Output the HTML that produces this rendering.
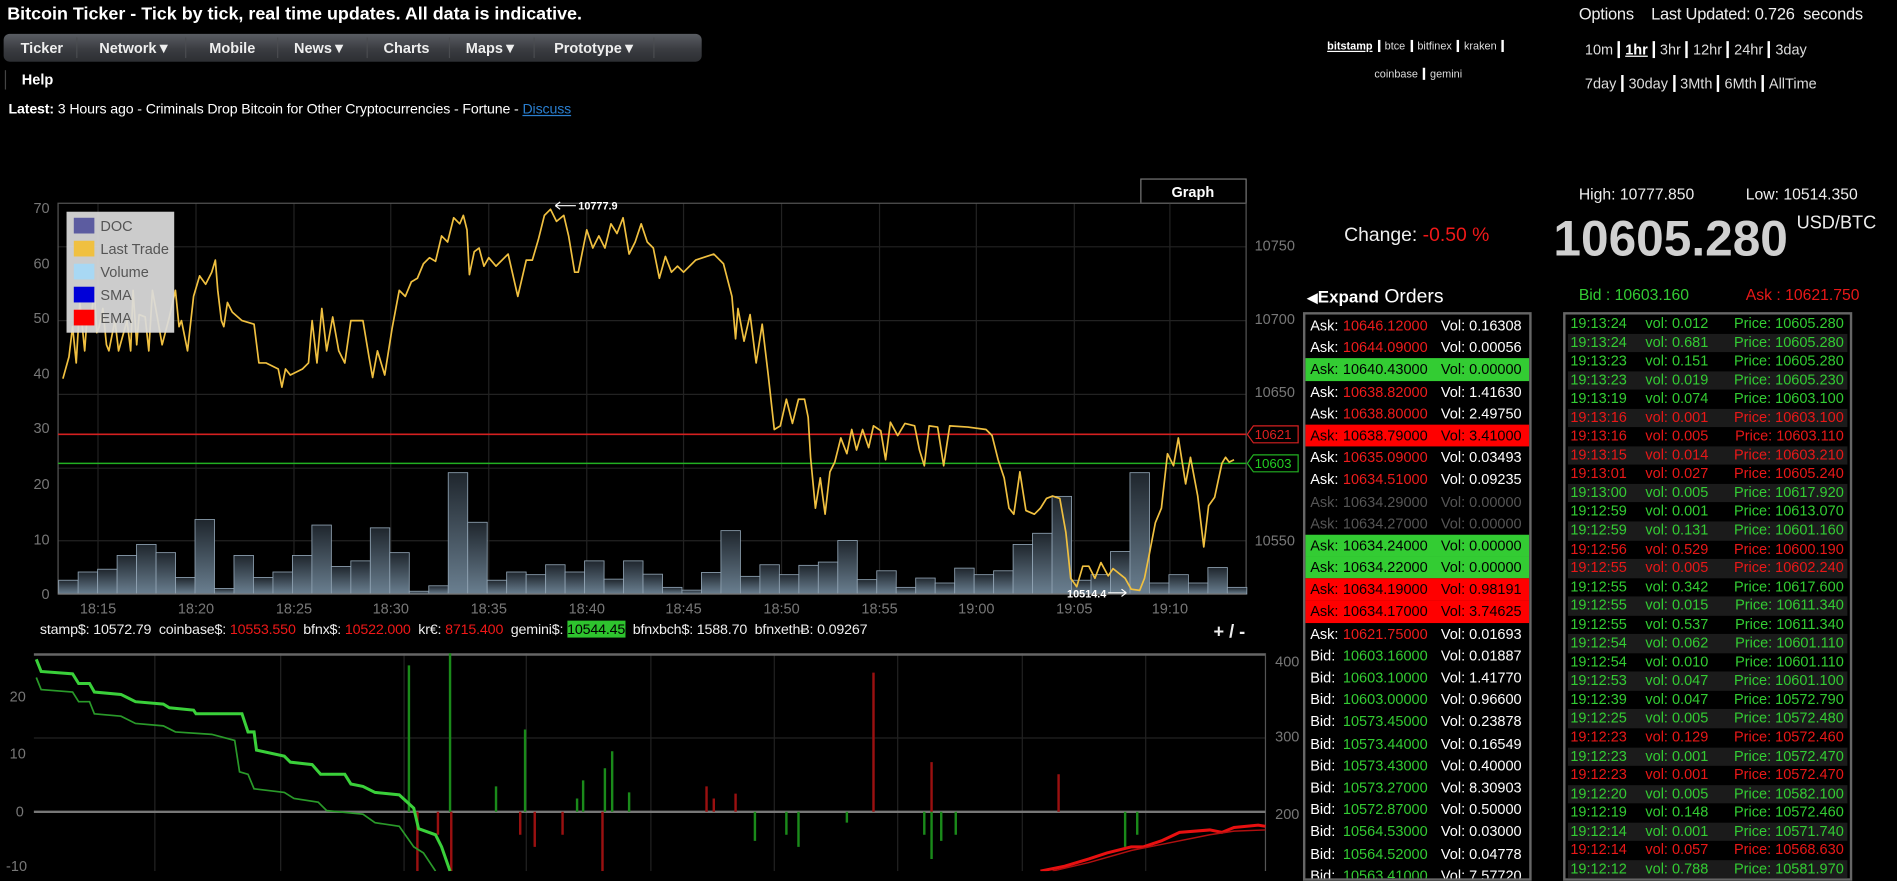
<!DOCTYPE html>
<html><head><meta charset="utf-8">
<style>
*{margin:0;padding:0;box-sizing:border-box}
html,body{width:1897px;height:871px;overflow:hidden;background:#000}
#w{position:absolute;left:0;top:0;width:1568px;height:720px;transform:scale(1.20982);transform-origin:0 0;font-family:"Liberation Sans",Arial,sans-serif;color:#fff}
.a{position:absolute;white-space:nowrap}
.nav{position:absolute;left:3px;top:28px;width:577px;height:23px;border-radius:5px;background:linear-gradient(#5a5d63,#3a3c41 55%,#2c2e32)}
.nav span{position:absolute;top:5px;font-size:12px;font-weight:bold;color:#eee}
.nav i{position:absolute;top:3px;width:1px;height:17px;background:#4a4c50}
.sep{border-right:2px solid #fff;padding-right:4px;margin-right:4px}
.ex{font-size:9px;color:#ddd}
.tf{font-size:12px;color:#ddd}
.ob{position:absolute;left:1077px;top:258px;width:189px;height:470px;border:2px solid #666;overflow:hidden}
.ob div{height:18.2px;font-size:12px;line-height:18.2px;position:relative;color:#fff}
.ob b{font-weight:normal;position:absolute;left:4px}
.ob u{text-decoration:none;position:absolute;left:31px}
.ob s{text-decoration:none;position:absolute;left:112px}
.rd u{color:#ee1c1c}.gr u{color:#33cc33}
.gb{background:#33cc33;color:#000!important}.gb u{color:#000}
.rb{background:#f00;color:#000!important}.rb u{color:#000}
.gy{color:#555!important}.gy u{color:#555}
.tb{position:absolute;left:1292px;top:258px;width:239px;height:470px;border:2px solid #666;overflow:hidden;padding:0 2px}
.tb div{height:15.55px;font-size:12px;line-height:15.55px;position:relative;color:#3c3}
.tb div:nth-child(even){background:#1b1b1b}
.tb .r{color:#e81818}
.tb b{font-weight:normal;position:absolute;left:2px}
.tb u{text-decoration:none;position:absolute;left:64px}
.tb s{text-decoration:none;position:absolute;right:3px}
</style></head><body><div id="w">
<div class="a" style="left:6px;top:4px;font-size:14.8px;font-weight:bold">Bitcoin Ticker - Tick by tick, real time updates. All data is indicative.</div>
<div class="nav">
<span style="left:14px">Ticker</span><i style="left:60px"></i>
<span style="left:79px">Network▼</span><i style="left:150px"></i>
<span style="left:170px">Mobile</span><i style="left:226px"></i>
<span style="left:240px">News▼</span><i style="left:300px"></i>
<span style="left:314px">Charts</span><i style="left:368px"></i>
<span style="left:382px">Maps▼</span><i style="left:438px"></i>
<span style="left:455px">Prototype▼</span><i style="left:537px"></i>
</div>
<div class="a" style="left:4px;top:58px;width:1px;height:16px;background:#444"></div>
<div class="a" style="left:18px;top:59px;font-size:12px;font-weight:bold">Help</div>
<div class="a" style="left:7px;top:84px;font-size:11.7px;letter-spacing:-0.1px"><b>Latest:</b> 3 Hours ago - Criminals Drop Bitcoin for Other Cryptocurrencies - Fortune - <span style="color:#2a7fd0;text-decoration:underline">Discuss</span></div>

<div class="a ex" style="left:1097px;top:33px"><span class="sep" style="font-weight:bold;text-decoration:underline;color:#fff">bitstamp</span><span class="sep">btce</span><span class="sep">bitfinex</span><span class="sep">kraken</span></div>
<div class="a ex" style="left:1136px;top:56px"><span class="sep">coinbase</span><span>gemini</span></div>

<div class="a" style="left:1305px;top:4px;font-size:13.6px;color:#eee;letter-spacing:-0.2px">Options &nbsp;&nbsp; Last Updated: 0.726 &nbsp;seconds</div>
<div class="a tf" style="left:1310px;top:34px"><span class="sep">10m</span><span class="sep" style="font-weight:bold;text-decoration:underline;color:#fff">1hr</span><span class="sep">3hr</span><span class="sep">12hr</span><span class="sep">24hr</span><span>3day</span></div>
<div class="a tf" style="left:1310px;top:62px"><span class="sep">7day</span><span class="sep">30day</span><span class="sep">3Mth</span><span class="sep">6Mth</span><span>AllTime</span></div>

<div class="a" style="left:1305px;top:153px;font-size:13px;color:#eee">High: 10777.850</div>
<div class="a" style="left:1443px;top:153px;font-size:13px;color:#eee">Low: 10514.350</div>
<div class="a" style="left:1284px;top:174px;font-size:41px;font-weight:bold;color:#d0d0d0">10605.280</div>
<div class="a" style="left:1485px;top:176px;font-size:15px;color:#eee">USD/BTC</div>
<div class="a" style="left:1111px;top:186px;font-size:16px;color:#eee">Change: <span style="color:#f01818">-0.50 %</span></div>
<div class="a" style="left:1305px;top:236px;font-size:13px;color:#3c3">Bid : 10603.160</div>
<div class="a" style="left:1443px;top:236px;font-size:13px;color:#e81818">Ask : 10621.750</div>
<div class="a" style="left:1080px;top:237px;font-size:16px"><span style="font-size:12px">◀</span><b style="font-size:14px">Expand</b> Orders</div>

<div class="ob">
<div class="rd"><b>Ask:</b><u>10646.12000</u><s>Vol: 0.16308</s></div>
<div class="rd"><b>Ask:</b><u>10644.09000</u><s>Vol: 0.00056</s></div>
<div class="gb"><b>Ask:</b><u>10640.43000</u><s>Vol: 0.00000</s></div>
<div class="rd"><b>Ask:</b><u>10638.82000</u><s>Vol: 1.41630</s></div>
<div class="rd"><b>Ask:</b><u>10638.80000</u><s>Vol: 2.49750</s></div>
<div class="rb"><b>Ask:</b><u>10638.79000</u><s>Vol: 3.41000</s></div>
<div class="rd"><b>Ask:</b><u>10635.09000</u><s>Vol: 0.03493</s></div>
<div class="rd"><b>Ask:</b><u>10634.51000</u><s>Vol: 0.09235</s></div>
<div class="gy"><b>Ask:</b><u>10634.29000</u><s>Vol: 0.00000</s></div>
<div class="gy"><b>Ask:</b><u>10634.27000</u><s>Vol: 0.00000</s></div>
<div class="gb"><b>Ask:</b><u>10634.24000</u><s>Vol: 0.00000</s></div>
<div class="gb"><b>Ask:</b><u>10634.22000</u><s>Vol: 0.00000</s></div>
<div class="rb"><b>Ask:</b><u>10634.19000</u><s>Vol: 0.98191</s></div>
<div class="rb"><b>Ask:</b><u>10634.17000</u><s>Vol: 3.74625</s></div>
<div class="rd"><b>Ask:</b><u>10621.75000</u><s>Vol: 0.01693</s></div>
<div class="gr"><b>Bid:</b><u>10603.16000</u><s>Vol: 0.01887</s></div>
<div class="gr"><b>Bid:</b><u>10603.10000</u><s>Vol: 1.41770</s></div>
<div class="gr"><b>Bid:</b><u>10603.00000</u><s>Vol: 0.96600</s></div>
<div class="gr"><b>Bid:</b><u>10573.45000</u><s>Vol: 0.23878</s></div>
<div class="gr"><b>Bid:</b><u>10573.44000</u><s>Vol: 0.16549</s></div>
<div class="gr"><b>Bid:</b><u>10573.43000</u><s>Vol: 0.40000</s></div>
<div class="gr"><b>Bid:</b><u>10573.27000</u><s>Vol: 8.30903</s></div>
<div class="gr"><b>Bid:</b><u>10572.87000</u><s>Vol: 0.50000</s></div>
<div class="gr"><b>Bid:</b><u>10564.53000</u><s>Vol: 0.03000</s></div>
<div class="gr"><b>Bid:</b><u>10564.52000</u><s>Vol: 0.04778</s></div>
<div class="gr"><b>Bid:</b><u>10563.41000</u><s>Vol: 7.57720</s></div>
</div>

<div class="tb">
<div><b>19:13:24</b><u>vol: 0.012</u><s>Price: 10605.280</s></div>
<div><b>19:13:24</b><u>vol: 0.681</u><s>Price: 10605.280</s></div>
<div><b>19:13:23</b><u>vol: 0.151</u><s>Price: 10605.280</s></div>
<div><b>19:13:23</b><u>vol: 0.019</u><s>Price: 10605.230</s></div>
<div><b>19:13:19</b><u>vol: 0.074</u><s>Price: 10603.100</s></div>
<div class="r"><b>19:13:16</b><u>vol: 0.001</u><s>Price: 10603.100</s></div>
<div class="r"><b>19:13:16</b><u>vol: 0.005</u><s>Price: 10603.110</s></div>
<div class="r"><b>19:13:15</b><u>vol: 0.014</u><s>Price: 10603.210</s></div>
<div class="r"><b>19:13:01</b><u>vol: 0.027</u><s>Price: 10605.240</s></div>
<div><b>19:13:00</b><u>vol: 0.005</u><s>Price: 10617.920</s></div>
<div><b>19:12:59</b><u>vol: 0.001</u><s>Price: 10613.070</s></div>
<div><b>19:12:59</b><u>vol: 0.131</u><s>Price: 10601.160</s></div>
<div class="r"><b>19:12:56</b><u>vol: 0.529</u><s>Price: 10600.190</s></div>
<div class="r"><b>19:12:55</b><u>vol: 0.005</u><s>Price: 10602.240</s></div>
<div><b>19:12:55</b><u>vol: 0.342</u><s>Price: 10617.600</s></div>
<div><b>19:12:55</b><u>vol: 0.015</u><s>Price: 10611.340</s></div>
<div><b>19:12:55</b><u>vol: 0.537</u><s>Price: 10611.340</s></div>
<div><b>19:12:54</b><u>vol: 0.062</u><s>Price: 10601.110</s></div>
<div><b>19:12:54</b><u>vol: 0.010</u><s>Price: 10601.110</s></div>
<div><b>19:12:53</b><u>vol: 0.047</u><s>Price: 10601.100</s></div>
<div><b>19:12:39</b><u>vol: 0.047</u><s>Price: 10572.790</s></div>
<div><b>19:12:25</b><u>vol: 0.005</u><s>Price: 10572.480</s></div>
<div class="r"><b>19:12:23</b><u>vol: 0.129</u><s>Price: 10572.460</s></div>
<div><b>19:12:23</b><u>vol: 0.001</u><s>Price: 10572.470</s></div>
<div class="r"><b>19:12:23</b><u>vol: 0.001</u><s>Price: 10572.470</s></div>
<div><b>19:12:20</b><u>vol: 0.005</u><s>Price: 10582.100</s></div>
<div><b>19:12:19</b><u>vol: 0.148</u><s>Price: 10572.460</s></div>
<div><b>19:12:14</b><u>vol: 0.001</u><s>Price: 10571.740</s></div>
<div class="r"><b>19:12:14</b><u>vol: 0.057</u><s>Price: 10568.630</s></div>
<div><b>19:12:12</b><u>vol: 0.788</u><s>Price: 10581.970</s></div>
</div>

<svg class="a" style="left:0;top:140px" width="1080" height="380" viewBox="0 140 1080 380" font-family="Liberation Sans, Arial, sans-serif">
<defs><linearGradient id="bg" x1="0" y1="0" x2="0" y2="1"><stop offset="0" stop-color="#1f262d"/><stop offset="1" stop-color="#6a7f90"/></linearGradient></defs>
<rect x="943" y="148" width="87" height="20" fill="#000" stroke="#777"/>
<text x="986" y="163" font-size="12" font-weight="bold" fill="#fff" text-anchor="middle">Graph</text>
<g stroke="#222" stroke-width="1">
<line x1="48" y1="204" x2="1030" y2="204"/><line x1="48" y1="265" x2="1030" y2="265"/><line x1="48" y1="326" x2="1030" y2="326"/><line x1="48" y1="387" x2="1030" y2="387"/><line x1="48" y1="447" x2="1030" y2="447"/>
<line x1="81" y1="168" x2="81" y2="491"/><line x1="162" y1="168" x2="162" y2="491"/><line x1="243" y1="168" x2="243" y2="491"/><line x1="323" y1="168" x2="323" y2="491"/><line x1="404" y1="168" x2="404" y2="491"/><line x1="485" y1="168" x2="485" y2="491"/><line x1="565" y1="168" x2="565" y2="491"/><line x1="646" y1="168" x2="646" y2="491"/><line x1="727" y1="168" x2="727" y2="491"/><line x1="807" y1="168" x2="807" y2="491"/><line x1="888" y1="168" x2="888" y2="491"/><line x1="967" y1="168" x2="967" y2="491"/>
</g>
<rect x="48" y="168" width="982" height="323" fill="none" stroke="#555"/>
<g id="bars"></g>
<line x1="48" y1="491" x2="1030" y2="491" stroke="#777"/>
<line x1="48" y1="359" x2="1030" y2="359" stroke="#d42020" stroke-width="1.3"/>
<line x1="48" y1="383" x2="1030" y2="383" stroke="#22b022" stroke-width="1.3"/>
<polyline fill="none" stroke="#f0c040" stroke-width="1.4" stroke-linejoin="round" points="52,313 57,295 60,270 63,300 66,250 70,290 72,262 75,265 78,240 80,275 82,270 85,255 88,285 90,290 95,265 98,290 105,265 108,290 110,240 113,285 115,260 120,262 123,290 126,240 130,262 134,285 140,262 145,240 148,270 150,265 155,290 160,245 165,228 170,235 175,225 178,215 180,240 183,265 185,270 188,250 192,258 200,265 210,268 214,300 220,300 230,305 233,320 236,305 240,310 250,305 255,300 258,265 262,300 266,255 270,290 275,262 280,290 285,300 290,265 300,265 305,295 308,312 312,290 318,310 324,272 330,240 335,245 340,233 345,230 350,218 355,213 360,216 365,195 370,200 375,180 380,185 383,178 386,190 388,227 392,208 396,205 400,220 404,213 410,220 420,210 428,245 435,215 440,215 445,198 450,178 455,173 460,183 466,178 470,195 475,225 478,225 485,190 490,205 495,195 500,205 505,185 510,193 515,180 520,210 525,200 530,185 535,200 540,205 545,230 550,212 555,225 560,220 565,225 575,215 590,210 598,218 605,245 608,280 610,255 615,282 620,260 625,300 630,268 635,310 640,355 645,352 650,330 655,350 660,330 665,330 668,345 670,378 674,420 678,395 682,425 686,390 690,382 695,362 700,375 704,355 708,372 713,355 718,370 722,352 728,356 732,380 736,349 742,360 748,350 756,352 760,372 764,385 768,352 775,353 780,385 785,352 800,353 815,355 820,360 825,380 830,395 834,420 838,425 843,390 848,422 855,425 860,420 865,412 870,410 876,412 881,440 885,478 890,485 895,468 900,468 905,478 910,465 916,476 920,470 930,478 935,487 942,488 946,478 950,458 955,432 960,420 965,375 970,385 974,362 980,400 984,378 990,410 995,452 999,418 1004,411 1010,383 1013,378 1016,382 1020,380"/>
<text x="478" y="173" font-size="9" font-weight="bold" fill="#fff">10777.9</text>
<path d="M459 170 H476 M459 170 l4 -3 M459 170 l4 3" stroke="#fff" fill="none"/>
<text x="882" y="494" font-size="9" font-weight="bold" fill="#fff">10514.4</text>
<path d="M916 490 H931 M931 490 l-4 -3 M931 490 l-4 3" stroke="#fff" fill="none"/>
<rect x="55" y="175" width="89" height="100" fill="#dcdcdc" opacity="0.93"/>
<g font-size="12" fill="#555">
<rect x="61" y="180" width="17" height="13" fill="#5c5ca0"/><text x="83" y="191">DOC</text>
<rect x="61" y="199" width="17" height="13" fill="#f0c040"/><text x="83" y="210">Last Trade</text>
<rect x="61" y="218" width="17" height="13" fill="#a8d8f4"/><text x="83" y="229">Volume</text>
<rect x="61" y="237" width="17" height="13" fill="#0000d8"/><text x="83" y="248">SMA</text>
<rect x="61" y="256" width="17" height="13" fill="#ff0000"/><text x="83" y="267">EMA</text>
</g>
<g font-size="12" fill="#777" text-anchor="end">
<text x="41" y="176">70</text><text x="41" y="313">40</text><text x="41" y="267">50</text><text x="41" y="222">60</text><text x="41" y="358">30</text><text x="41" y="404">20</text><text x="41" y="450">10</text><text x="41" y="495">0</text>
</g>
<g font-size="12" fill="#777">
<text x="1037" y="207">10750</text><text x="1037" y="268">10700</text><text x="1037" y="328">10650</text><text x="1037" y="451">10550</text>
</g>
<path d="M1031 359 l5 -7 h37 v14 h-37 z" fill="#000" stroke="#d42020"/><text x="1037" y="363" font-size="11" fill="#e02020">10621</text>
<path d="M1031 383 l5 -7 h37 v14 h-37 z" fill="#000" stroke="#22b022"/><text x="1037" y="387" font-size="11" fill="#2c2">10603</text>
<g font-size="12" fill="#777" text-anchor="middle">
<text x="81" y="507">18:15</text><text x="162" y="507">18:20</text><text x="243" y="507">18:25</text><text x="323" y="507">18:30</text><text x="404" y="507">18:35</text><text x="485" y="507">18:40</text><text x="565" y="507">18:45</text><text x="646" y="507">18:50</text><text x="727" y="507">18:55</text><text x="807" y="507">19:00</text><text x="888" y="507">19:05</text><text x="967" y="507">19:10</text>
</g>
</svg>

<div class="a" style="left:33px;top:513px;font-size:11.8px;color:#eee;letter-spacing:-0.15px">stamp$: 10572.79 &nbsp;coinbase$: <span style="color:#f01818">10553.550</span> &nbsp;bfnx$: <span style="color:#f01818">10522.000</span> &nbsp;kr€: <span style="color:#f01818">8715.400</span> &nbsp;gemini$: <span style="background:#2ec42e;color:#000">10544.45</span> &nbsp;bfnxbch$: 1588.70 &nbsp;bfnxethɃ: 0.09267</div>
<div class="a" style="left:1003px;top:514px;font-size:15px;font-weight:bold;color:#eee">+ / -</div>

<svg class="a" style="left:0;top:530px" width="1080" height="190" viewBox="0 530 1080 190" font-family="Liberation Sans, Arial, sans-serif">
<g stroke="#222"><line x1="28" y1="610" x2="1046" y2="610"/>
<line x1="128" y1="540" x2="128" y2="720"/><line x1="232" y1="540" x2="232" y2="720"/><line x1="334" y1="540" x2="334" y2="720"/><line x1="435" y1="540" x2="435" y2="720"/><line x1="538" y1="540" x2="538" y2="720"/><line x1="640" y1="540" x2="640" y2="720"/><line x1="742" y1="540" x2="742" y2="720"/><line x1="845" y1="540" x2="845" y2="720"/><line x1="947" y1="540" x2="947" y2="720"/></g>
<line x1="28" y1="541" x2="1046" y2="541" stroke="#666" stroke-width="2"/>
<line x1="1046" y1="540" x2="1046" y2="720" stroke="#555"/>
<line x1="28" y1="671" x2="1046" y2="671" stroke="#777" stroke-width="2"/>
<g stroke="#1a8a1a" stroke-width="2">
<line x1="338" y1="550" x2="338" y2="671"/><line x1="372" y1="540" x2="372" y2="671"/><line x1="434" y1="603" x2="434" y2="671"/><line x1="506" y1="621" x2="506" y2="671"/><line x1="520" y1="655" x2="520" y2="671"/><line x1="410" y1="650" x2="410" y2="671"/><line x1="477" y1="660" x2="477" y2="671"/><line x1="482" y1="645" x2="482" y2="671"/><line x1="500" y1="635" x2="500" y2="671"/><line x1="624" y1="671" x2="624" y2="695"/><line x1="650" y1="671" x2="650" y2="690"/><line x1="660" y1="671" x2="660" y2="700"/><line x1="700" y1="671" x2="700" y2="680"/><line x1="764" y1="671" x2="764" y2="690"/><line x1="770" y1="671" x2="770" y2="710"/><line x1="778" y1="671" x2="778" y2="695"/><line x1="790" y1="671" x2="790" y2="690"/><line x1="930" y1="671" x2="930" y2="700"/><line x1="940" y1="671" x2="940" y2="690"/>
</g>
<g stroke="#9a1010" stroke-width="2">
<line x1="722" y1="556" x2="722" y2="671"/><line x1="770" y1="630" x2="770" y2="671"/><line x1="345" y1="671" x2="345" y2="720"/><line x1="362" y1="671" x2="362" y2="690"/><line x1="373" y1="671" x2="373" y2="720"/><line x1="442" y1="671" x2="442" y2="700"/><line x1="465" y1="671" x2="465" y2="690"/><line x1="498" y1="671" x2="498" y2="720"/><line x1="584" y1="650" x2="584" y2="671"/><line x1="590" y1="660" x2="590" y2="671"/><line x1="608" y1="656" x2="608" y2="671"/><line x1="875" y1="640" x2="875" y2="671"/><line x1="430" y1="671" x2="430" y2="690"/></g>
<polyline fill="none" stroke="#2a9a2a" stroke-width="1.4" points="30,560 34,570 60,572 65,580 74,580 78,590 100,592 112,598 135,600 145,605 175,607 194,612 198,638 205,640 210,652 235,655 243,660 263,663 270,670 300,673 310,680 330,683 342,700 350,705 360,720"/>
<polyline fill="none" stroke="#3ad03a" stroke-width="2.5" points="30,545 34,555 60,557 65,565 74,565 78,572 100,574 112,580 135,582 140,585 160,587 162,590 200,590 205,605 210,605 212,620 235,625 240,630 258,632 265,640 285,640 290,648 300,650 310,655 330,657 342,668 346,685 360,690 365,700 372,720"/>
<polyline fill="none" stroke="#e81010" stroke-width="2.5" points="860,720 880,716 900,710 915,705 935,700 945,700 960,695 975,688 1000,686 1010,688 1020,684 1040,682 1046,683"/>
<polyline fill="none" stroke="#b01010" stroke-width="1.2" points="870,720 900,713 935,703 960,698 1000,690 1020,687 1046,686"/>
<g font-size="12" fill="#777">
<text x="8" y="580">20</text><text x="8" y="627">10</text><text x="13" y="675">0</text><text x="5" y="720">-10</text>
<text x="1054" y="551">400</text><text x="1054" y="613">300</text><text x="1054" y="677">200</text>
</g>
</svg>
</div>
<script>
var h=[2.5,4,4.5,7,9,7.5,3,13.5,1,7,3,4,7,12.5,5,6,12,7.5,0.5,1.5,22,13,2.5,4,3.5,5.3,4,6,2.7,6,3.6,1.2,0.7,3.9,11.5,3.2,5.3,3.5,5.2,5.8,9.7,2.6,4.2,1.2,2.9,2,4.7,3.5,4.2,9,11,17.7,2.5,3.5,7.7,22,2,3.5,2,4.8,1.2];
var s='';for(var i=0;i<h.length;i++){var x=48.5+i*16.1,hh=h[i]*4.56;s+='<rect x="'+x.toFixed(1)+'" y="'+(491-hh).toFixed(1)+'" width="16.1" height="'+hh.toFixed(1)+'" fill="url(#bg)" stroke="#8fa2b2" stroke-width="0.7"/>';}
document.getElementById('bars').innerHTML=s;
</script>
</body></html>
